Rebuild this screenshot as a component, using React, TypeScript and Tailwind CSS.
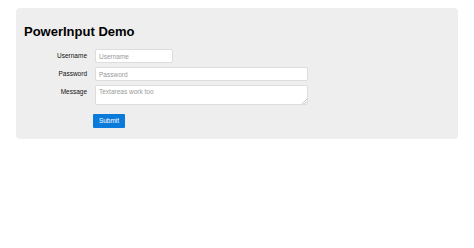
export default function App() {
  const font = { fontFamily: '"Liberation Sans", Arial, sans-serif' };
  return (
    <div className="w-[474px] h-[248px] bg-white" style={font}>
      <div className="ml-[16px] mt-[8px] w-[442px] h-[131px] rounded-[4px] bg-[#eeeeee] pl-[8px] pt-[16px]">
        <h1 className="text-[13px] leading-[16px] font-bold text-black">PowerInput Demo</h1>
        <div className="mt-[9px] grid grid-cols-[63px_auto] gap-x-[8px] text-[6.5px] text-[#111]">
          <label className="self-center text-right leading-[8px]">Username</label>
          <input
            className="w-[78px] h-[14px] bg-white border border-[#dddddd] rounded-[2px] px-[3px] text-[6.5px] outline-none placeholder:text-[#999]"
            placeholder="Username"
          />
          <label className="mt-[4px] self-center text-right leading-[8px]">Password</label>
          <input
            type="password"
            className="mt-[4px] w-[213px] h-[14px] bg-white border border-[#dddddd] rounded-[2px] px-[3px] text-[6.5px] outline-none placeholder:text-[#999]"
            placeholder="Password"
          />
          <label className="mt-[5px] pt-[2px] text-right leading-[8px]">Message</label>
          <div className="relative mt-[4px] w-[213px] h-[20px]">
            <textarea
              className="w-full h-full bg-white border border-[#dddddd] rounded-[2px] px-[3px] py-[2px] text-[6.5px] leading-[8px] outline-none resize-none placeholder:text-[#999] block"
              placeholder="Textareas work too"
            />
            <svg className="absolute right-[1px] bottom-[1px]" width="5" height="5" viewBox="0 0 5 5">
              <path d="M5 0 L0 5 M5 2.5 L2.5 5" stroke="#aaaaaa" strokeWidth="0.7" />
            </svg>
          </div>
          <div />
          <div className="mt-[9px] -ml-[2px]">
            <button className="w-[32px] h-[14px] bg-[#0a7bdb] text-white text-[6.5px] rounded-[1px]">Submit</button>
          </div>
        </div>
      </div>
    </div>
  );
}
